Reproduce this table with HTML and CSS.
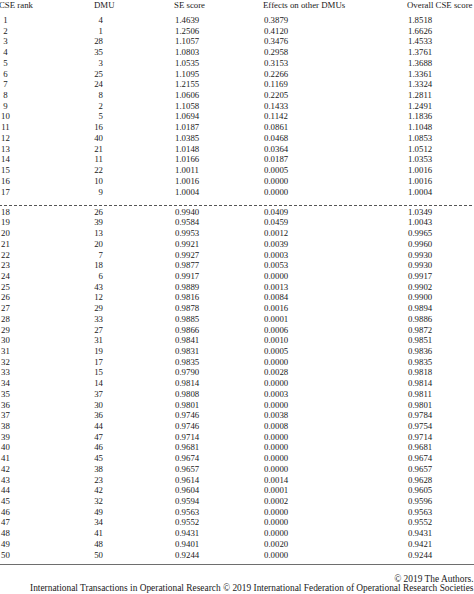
FILE: index.html
```html
<!DOCTYPE html>
<html>
<head>
<meta charset="utf-8">
<link rel="stylesheet" href="styles.css">
</head>
<body>
<div class="page">
  <div class="head">
    <span>CSE rank</span><span>DMU</span><span>SE score</span><span>Effects on other DMUs</span><span>Overall CSE score</span>
  </div>
  <div class="group">
    <div class="row"><span class="rk">1</span><span class="dmu">4</span><span class="se">1.4639</span><span>0.3879</span><span>1.8518</span></div>
    <div class="row"><span class="rk">2</span><span class="dmu">1</span><span class="se">1.2506</span><span>0.4120</span><span>1.6626</span></div>
    <div class="row"><span class="rk">3</span><span class="dmu">28</span><span class="se">1.1057</span><span>0.3476</span><span>1.4533</span></div>
    <div class="row"><span class="rk">4</span><span class="dmu">35</span><span class="se">1.0803</span><span>0.2958</span><span>1.3761</span></div>
    <div class="row"><span class="rk">5</span><span class="dmu">3</span><span class="se">1.0535</span><span>0.3153</span><span>1.3688</span></div>
    <div class="row"><span class="rk">6</span><span class="dmu">25</span><span class="se">1.1095</span><span>0.2266</span><span>1.3361</span></div>
    <div class="row"><span class="rk">7</span><span class="dmu">24</span><span class="se">1.2155</span><span>0.1169</span><span>1.3324</span></div>
    <div class="row"><span class="rk">8</span><span class="dmu">8</span><span class="se">1.0606</span><span>0.2205</span><span>1.2811</span></div>
    <div class="row"><span class="rk">9</span><span class="dmu">2</span><span class="se">1.1058</span><span>0.1433</span><span>1.2491</span></div>
    <div class="row"><span class="rk">10</span><span class="dmu">5</span><span class="se">1.0694</span><span>0.1142</span><span>1.1836</span></div>
    <div class="row"><span class="rk">11</span><span class="dmu">16</span><span class="se">1.0187</span><span>0.0861</span><span>1.1048</span></div>
    <div class="row"><span class="rk">12</span><span class="dmu">40</span><span class="se">1.0385</span><span>0.0468</span><span>1.0853</span></div>
    <div class="row"><span class="rk">13</span><span class="dmu">21</span><span class="se">1.0148</span><span>0.0364</span><span>1.0512</span></div>
    <div class="row"><span class="rk">14</span><span class="dmu">11</span><span class="se">1.0166</span><span>0.0187</span><span>1.0353</span></div>
    <div class="row"><span class="rk">15</span><span class="dmu">22</span><span class="se">1.0011</span><span>0.0005</span><span>1.0016</span></div>
    <div class="row"><span class="rk">16</span><span class="dmu">10</span><span class="se">1.0016</span><span>0.0000</span><span>1.0016</span></div>
    <div class="row"><span class="rk">17</span><span class="dmu">9</span><span class="se">1.0004</span><span>0.0000</span><span>1.0004</span></div>
  </div>
  <div class="dash"></div>
  <div class="group">
    <div class="row"><span class="rk">18</span><span class="dmu">26</span><span class="se">0.9940</span><span>0.0409</span><span>1.0349</span></div>
    <div class="row"><span class="rk">19</span><span class="dmu">39</span><span class="se">0.9584</span><span>0.0459</span><span>1.0043</span></div>
    <div class="row"><span class="rk">20</span><span class="dmu">13</span><span class="se">0.9953</span><span>0.0012</span><span>0.9965</span></div>
    <div class="row"><span class="rk">21</span><span class="dmu">20</span><span class="se">0.9921</span><span>0.0039</span><span>0.9960</span></div>
    <div class="row"><span class="rk">22</span><span class="dmu">7</span><span class="se">0.9927</span><span>0.0003</span><span>0.9930</span></div>
    <div class="row"><span class="rk">23</span><span class="dmu">18</span><span class="se">0.9877</span><span>0.0053</span><span>0.9930</span></div>
    <div class="row"><span class="rk">24</span><span class="dmu">6</span><span class="se">0.9917</span><span>0.0000</span><span>0.9917</span></div>
    <div class="row"><span class="rk">25</span><span class="dmu">43</span><span class="se">0.9889</span><span>0.0013</span><span>0.9902</span></div>
    <div class="row"><span class="rk">26</span><span class="dmu">12</span><span class="se">0.9816</span><span>0.0084</span><span>0.9900</span></div>
    <div class="row"><span class="rk">27</span><span class="dmu">29</span><span class="se">0.9878</span><span>0.0016</span><span>0.9894</span></div>
    <div class="row"><span class="rk">28</span><span class="dmu">33</span><span class="se">0.9885</span><span>0.0001</span><span>0.9886</span></div>
    <div class="row"><span class="rk">29</span><span class="dmu">27</span><span class="se">0.9866</span><span>0.0006</span><span>0.9872</span></div>
    <div class="row"><span class="rk">30</span><span class="dmu">31</span><span class="se">0.9841</span><span>0.0010</span><span>0.9851</span></div>
    <div class="row"><span class="rk">31</span><span class="dmu">19</span><span class="se">0.9831</span><span>0.0005</span><span>0.9836</span></div>
    <div class="row"><span class="rk">32</span><span class="dmu">17</span><span class="se">0.9835</span><span>0.0000</span><span>0.9835</span></div>
    <div class="row"><span class="rk">33</span><span class="dmu">15</span><span class="se">0.9790</span><span>0.0028</span><span>0.9818</span></div>
    <div class="row"><span class="rk">34</span><span class="dmu">14</span><span class="se">0.9814</span><span>0.0000</span><span>0.9814</span></div>
    <div class="row"><span class="rk">35</span><span class="dmu">37</span><span class="se">0.9808</span><span>0.0003</span><span>0.9811</span></div>
    <div class="row"><span class="rk">36</span><span class="dmu">30</span><span class="se">0.9801</span><span>0.0000</span><span>0.9801</span></div>
    <div class="row"><span class="rk">37</span><span class="dmu">36</span><span class="se">0.9746</span><span>0.0038</span><span>0.9784</span></div>
    <div class="row"><span class="rk">38</span><span class="dmu">44</span><span class="se">0.9746</span><span>0.0008</span><span>0.9754</span></div>
    <div class="row"><span class="rk">39</span><span class="dmu">47</span><span class="se">0.9714</span><span>0.0000</span><span>0.9714</span></div>
    <div class="row"><span class="rk">40</span><span class="dmu">46</span><span class="se">0.9681</span><span>0.0000</span><span>0.9681</span></div>
    <div class="row"><span class="rk">41</span><span class="dmu">45</span><span class="se">0.9674</span><span>0.0000</span><span>0.9674</span></div>
    <div class="row"><span class="rk">42</span><span class="dmu">38</span><span class="se">0.9657</span><span>0.0000</span><span>0.9657</span></div>
    <div class="row"><span class="rk">43</span><span class="dmu">23</span><span class="se">0.9614</span><span>0.0014</span><span>0.9628</span></div>
    <div class="row"><span class="rk">44</span><span class="dmu">42</span><span class="se">0.9604</span><span>0.0001</span><span>0.9605</span></div>
    <div class="row"><span class="rk">45</span><span class="dmu">32</span><span class="se">0.9594</span><span>0.0002</span><span>0.9596</span></div>
    <div class="row"><span class="rk">46</span><span class="dmu">49</span><span class="se">0.9563</span><span>0.0000</span><span>0.9563</span></div>
    <div class="row"><span class="rk">47</span><span class="dmu">34</span><span class="se">0.9552</span><span>0.0000</span><span>0.9552</span></div>
    <div class="row"><span class="rk">48</span><span class="dmu">41</span><span class="se">0.9431</span><span>0.0000</span><span>0.9431</span></div>
    <div class="row"><span class="rk">49</span><span class="dmu">48</span><span class="se">0.9401</span><span>0.0020</span><span>0.9421</span></div>
    <div class="row"><span class="rk">50</span><span class="dmu">50</span><span class="se">0.9244</span><span>0.0000</span><span>0.9244</span></div>
  </div>
  <div class="rule"></div>
  <div class="foot">
    <div>© 2019 The Authors.</div>
    <div>International Transactions in Operational Research © 2019 International Federation of Operational Research Societies</div>
  </div>
</div>
</body>
</html>
```
FILE: styles.css
```css
html, body {
  margin: 0;
  padding: 0;
  background: #ffffff;
}
body {
  overflow: hidden;
  width: 474px;
  height: 594px;
}
.page {
  font-family: "Liberation Serif", "Times New Roman", serif;
  font-size: 8.8px;
  color: #1a1a1a;
  white-space: nowrap;
  width: 480px;
  margin-left: -1px;
  margin-top: -0.4px;
}
.head {
  display: grid;
  grid-template-columns: 95px 80px 89px 144px 1fr;
  line-height: 10.72px;
  margin-bottom: 4.7px;
}
.row {
  display: grid;
  grid-template-columns: 13px 91px 72px 89px 144px 1fr;
  line-height: 10.72px;
}
.rk {
  text-align: center;
}
.dmu {
  text-align: right;
}
.se {
  grid-column: 4;
}
.dash {
  height: 1px;
  margin: 7.4px 0 1px 0;
  background: repeating-linear-gradient(to right, #555555 0 3px, transparent 3px 5px);
}
.rule {
  height: 1px;
  margin-top: 4px;
  margin-left: 1px;
  background: #6e6e6e;
}
.foot {
  font-size: 9.4px;
  line-height: 9.5px;
  text-align: right;
  margin-top: 9.6px;
  width: 474.5px;
}
```
